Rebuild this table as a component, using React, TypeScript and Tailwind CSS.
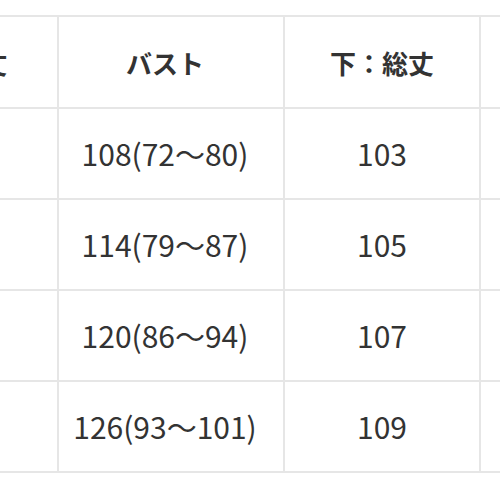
const rows = [
  { bust: "108(72～80)", length: "103" },
  { bust: "114(79～87)", length: "105" },
  { bust: "120(86～94)", length: "107" },
  { bust: "126(93～101)", length: "109" },
];

const cell = "flex items-center justify-center border-r-2 border-b-2 border-[#e6e6e6]";

export default function App() {
  return (
    <div
      className="w-[500px] h-[500px] overflow-hidden bg-white text-[#333]"
      style={{ fontFamily: '"Noto Sans CJK JP", "Noto Sans", sans-serif' }}
    >
      <div className="mt-[15px] ml-[-148px] w-[829px] grid grid-cols-[205px_226px_196px_200px] border-t-2 border-l-2 border-[#e6e6e6]">
        {/* header */}
        <div className={`${cell} h-[92px] text-[26px] font-bold`}>上：総丈</div>
        <div className={`${cell} h-[92px] pr-3 text-[26px] font-bold`}>バスト</div>
        <div className={`${cell} h-[92px] text-[26px] font-bold`}>下：総丈</div>
        <div className={`${cell} h-[92px]`} />

        {rows.map((r) => (
          <div key={r.bust} className="contents">
            <div className={`${cell} h-[91px]`} />
            <div className={`${cell} h-[91px] pr-3 text-[30px]`}>{r.bust}</div>
            <div className={`${cell} h-[91px] text-[30px]`}>{r.length}</div>
            <div className={`${cell} h-[91px]`} />
          </div>
        ))}
      </div>
    </div>
  );
}
